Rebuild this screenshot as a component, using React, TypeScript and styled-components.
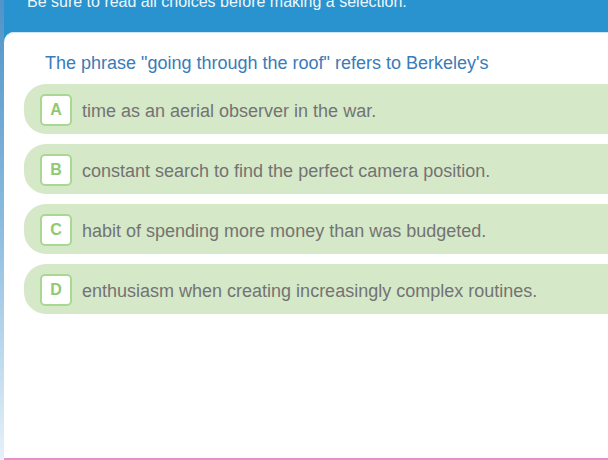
import React from "react";
import styled, { createGlobalStyle } from "styled-components";

const Global = createGlobalStyle`
  html, body { margin: 0; padding: 0; background: #ffffff; }
  body { font-family: "Liberation Sans", Arial, sans-serif; overflow: hidden; }
`;

const Page = styled.div`
  display: flex;
  width: 608px;
  height: 460px;
  overflow: hidden;
`;

const LeftStrip = styled.div`
  width: 4px;
  flex: none;
  background: linear-gradient(to bottom, #4f93c8 0%, #8dbde0 50%, #e6f1f9 100%);
`;

const Main = styled.div`
  flex: 1;
  display: flex;
  flex-direction: column;
  background: #2893cf;
  min-width: 0;
`;

const Header = styled.div`
  height: 32px;
  flex: none;
  padding-left: 23px;
  color: #ffffff;
  font-size: 16px;
  line-height: 16px;
  white-space: nowrap;
  overflow: hidden;
`;

const HeaderText = styled.div`
  margin-top: -6px;
  opacity: 0.92;
`;

const Panel = styled.div`
  flex: 1;
  background: #ffffff;
  border-top-left-radius: 10px;
  box-shadow: inset 0 1px 0 #cfe6f4;
  display: flex;
  flex-direction: column;
  padding-top: 20px;
  border-bottom: 2px solid #e78fc9;
`;

const Question = styled.div`
  color: #3a7bb9;
  font-size: 18px;
  line-height: 22px;
  padding-left: 41px;
  margin-bottom: 10px;
  white-space: nowrap;
`;

const Options = styled.div`
  display: flex;
  flex-direction: column;
  gap: 10px;
  padding-left: 20px;
`;

const Option = styled.div`
  height: 50px;
  background: #d5e8c8;
  border-radius: 22px 0 0 22px;
  display: flex;
  align-items: center;
  padding-left: 16px;
  gap: 10px;
`;

const Badge = styled.div`
  width: 28px;
  height: 28px;
  margin-top: 2px;
  border: 2px solid #a9d893;
  border-radius: 5px;
  background: #ffffff;
  color: #8ec973;
  font-weight: bold;
  font-size: 16px;
  display: flex;
  align-items: center;
  justify-content: center;
  flex: none;
`;

const OptionText = styled.div`
  color: #737373;
  font-size: 18px;
  padding-top: 5px;
  white-space: nowrap;
`;

const options = [
  { letter: "A", text: "time as an aerial observer in the war." },
  { letter: "B", text: "constant search to find the perfect camera position." },
  { letter: "C", text: "habit of spending more money than was budgeted." },
  { letter: "D", text: "enthusiasm when creating increasingly complex routines." },
];

export default function App() {
  return (
    <>
      <Global />
      <Page>
        <LeftStrip />
        <Main>
          <Header>
            <HeaderText>Be sure to read all choices before making a selection.</HeaderText>
          </Header>
          <Panel>
            <Question>The phrase "going through the roof" refers to Berkeley's</Question>
            <Options>
              {options.map((o) => (
                <Option key={o.letter}>
                  <Badge>{o.letter}</Badge>
                  <OptionText>{o.text}</OptionText>
                </Option>
              ))}
            </Options>
          </Panel>
        </Main>
      </Page>
    </>
  );
}
